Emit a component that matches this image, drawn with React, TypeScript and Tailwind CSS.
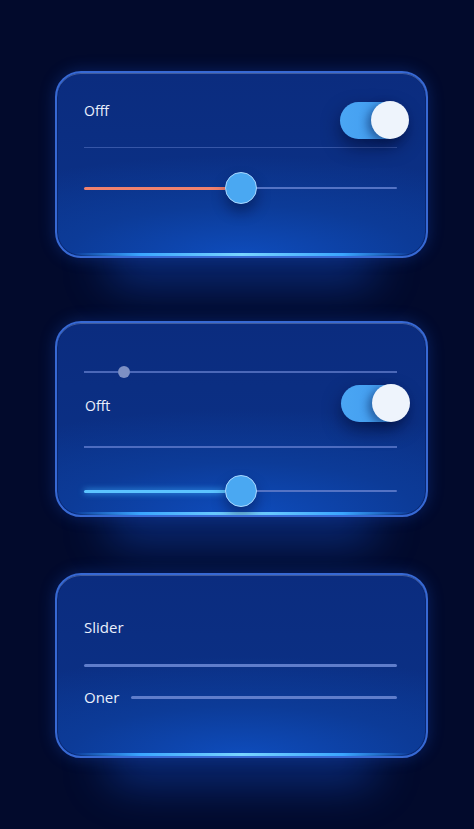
function Toggle() {
  return (
    <div className="flex h-[38px] w-[69px] shrink-0 items-center">
      <div className="flex h-[37px] w-[65px] items-center justify-end rounded-full bg-[linear-gradient(90deg,#4aa6f4,#3f98ec)] shadow-[0_8px_18px_rgba(0,8,40,0.55)]">
        <div className="-mr-[4px] h-[38px] w-[38px] shrink-0 rounded-full bg-[#eef4fc] shadow-[-4px_3px_8px_rgba(0,20,70,0.45)]" />
      </div>
    </div>
  );
}

function Slider({ fill, value }: { fill: string; value: number }) {
  return (
    <div className="flex h-[32px] items-center">
      <div className={`h-[3px] rounded-l-full ${fill}`} style={{ width: `calc(${value}% - 16px)` }} />
      <div className="h-[32px] w-[32px] shrink-0 rounded-full border-[1.5px] border-[#a9d8ff] bg-[#4aa8f2] shadow-[0_8px_14px_rgba(0,10,50,0.45)]" />
      <div className="h-[2px] flex-1 rounded-r-full bg-[#5473c4]" />
    </div>
  );
}

function Card({ className, children }: { className: string; children: React.ReactNode }) {
  return (
    <div className={`relative ml-[55px] w-[373px] ${className}`}>
      {/* glow that spills under the panel */}
      <div className="absolute left-[50px] right-[50px] -bottom-[28px] h-[50px] rounded-full bg-[#1864ff]/35 blur-[22px]" />
      <div className="relative h-full overflow-hidden rounded-[26px] border-2 border-[#3769d4] bg-[radial-gradient(ellipse_95%_55%_at_50%_100%,#0e4cbc_0%,#0c3b98_50%,transparent_100%),linear-gradient(180deg,#0b2c7f,#0b3288)] shadow-[inset_0_1px_0_rgba(170,200,255,0.35),inset_0_0_0_1px_rgba(10,30,90,0.6),0_0_16px_rgba(30,90,230,0.3)]">
        <div className="absolute bottom-0 left-[16px] right-[16px] h-[3px] bg-[linear-gradient(90deg,transparent,#3aa6ff_20%,#7ad6ff_50%,#3aa6ff_80%,transparent)]" />
        <div className="relative">{children}</div>
      </div>
    </div>
  );
}

export default function App() {
  return (
    <div className="h-[829px] w-[474px] overflow-hidden bg-[#020a2c] pt-[71px] font-['Open_Sans',sans-serif] text-[#eaf0fc]">
      {/* Switch + slider */}
      <Card className="h-[187px]">
        <div className="pl-[27px] pr-[17px] pt-[28px]">
          <div className="flex h-[38px] items-start justify-between">
            <span className="text-[14px] leading-5">Offf</span>
            <Toggle />
          </div>
          <div className="mr-[12px] mt-[8px] h-px bg-[#3656a8]" />
          <div className="mr-[12px] mt-[24px]">
            <Slider fill="bg-[#f0826e]" value={50} />
          </div>
        </div>
      </Card>

      {/* Two sliders with a switch between */}
      <Card className="mt-[63px] h-[196px]">
        <div className="pl-[27px] pr-[16px] pt-[43px]">
          <div className="mr-[13px] flex h-[12px] items-center">
            <div className="h-[2px] w-[34px] bg-[#4b68b8]" />
            <div className="h-[12px] w-[12px] shrink-0 rounded-full bg-[#7d90c4]" />
            <div className="h-[2px] flex-1 bg-[#4b68b8]" />
          </div>
          <div className="mt-[6px] flex h-[38px] items-center justify-between">
            <span className="mt-[6px] pl-[1px] text-[14px] leading-5">Offt</span>
            <Toggle />
          </div>
          <div className="mr-[13px] mt-[24px] h-[2px] bg-[#4d6cc0]" />
          <div className="mr-[13px] mt-[27px]">
            <Slider fill="bg-[#5cc4ff] shadow-[0_0_6px_#3fb0ff]" value={50} />
          </div>
        </div>
      </Card>

      {/* Labels and tracks */}
      <Card className="mt-[56px] h-[185px]">
        <div className="pl-[27px] pr-[29px] pt-[42px]">
          <div className="text-[15px] leading-5">Slider</div>
          <div className="mt-[27px] h-[3px] rounded-full bg-[#5f7dcb]" />
          <div className="mt-[20px] flex h-[20px] items-center gap-[12px]">
            <span className="text-[15px] leading-5">Oner</span>
            <div className="h-[3px] flex-1 rounded-full bg-[#5f7dcb]" />
          </div>
        </div>
      </Card>
    </div>
  );
}
